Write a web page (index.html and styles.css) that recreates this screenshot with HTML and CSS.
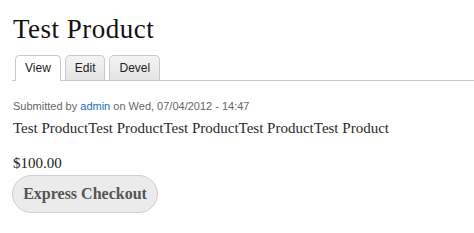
FILE: index.html
```html
<!DOCTYPE html>
<html lang="en">

<head>
  <meta charset="UTF-8">
  <title>Test Product</title>
  <link rel="stylesheet" href="styles.css">
</head>

<body>
  <div class="page">
    <h1 class="title">Test Product</h1>
    <ul class="tabs">
      <li class="tab active"><a href="#">View</a></li>
      <li class="tab"><a href="#">Edit</a></li>
      <li class="tab"><a href="#">Devel</a></li>
    </ul>
    <div class="node">
      <p class="submitted">Submitted by <a href="#">admin</a> on Wed, 07/04/2012 - 14:47</p>
      <p class="body">Test ProductTest ProductTest ProductTest ProductTest Product</p>
      <div class="price">$100.00</div>
      <button class="checkout" type="button">Express Checkout</button>
    </div>
  </div>
</body>

</html>
```

FILE: styles.css
```css
* {
  margin: 0;
  padding: 0;
  box-sizing: border-box;
}

body {
  background: #fff;
  font-family: "Liberation Serif", serif;
  color: #222;
}

.page {
  padding: 14px 0 0 13px;
}

.title {
  font-size: 27px;
  font-weight: normal;
  line-height: 30px;
  letter-spacing: 0.5px;
  color: #111;
}

.tabs {
  display: flex;
  gap: 4px;
  list-style: none;
  margin-top: 11px;
  margin-left: -1px;
  padding-left: 3px;
  border-bottom: 1px solid #c8c8c8;
  height: 26px;
}

.tab {
  height: 25px;
  border: 1px solid #c8c8c8;
  border-bottom: none;
  border-radius: 5px 5px 0 0;
  background: linear-gradient(#f4f4f4, #e4e4e4);

  & a {
    display: block;
    padding: 5px 9px 0;
    font: 12px "Liberation Sans", Arial, sans-serif;
    color: #222;
    text-decoration: none;
  }
}

.tab.active {
  background: #fff;
  height: 26px;
}

.node {
  padding-top: 18px;
}

.submitted {
  font: 11px/14px "Liberation Sans", Arial, sans-serif;
  color: #666;

  & a {
    color: #1a6fb4;
    text-decoration: none;
  }
}

.body {
  margin-top: 6px;
  font-size: 15px;
  line-height: 18px;
  color: #2a2a2a;
}

.price {
  margin-top: 17px;
  font-size: 15px;
  line-height: 18px;
  color: #222;
}

.checkout {
  margin-top: 3px;
  height: 38px;
  width: 146px;
  margin-left: -1px;
  border: 1px solid #cfcfcf;
  border-radius: 19px;
  background: #ebebeb;
  font: bold 16px "Liberation Serif", serif;
  color: #555;
}
```
